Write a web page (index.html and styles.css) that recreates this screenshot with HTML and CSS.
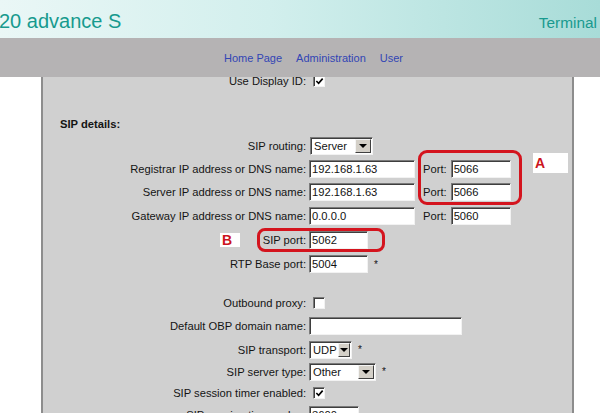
FILE: index.html
```html
<!DOCTYPE html>
<html>
<head>
<meta charset="utf-8">
<link rel="stylesheet" href="styles.css">
</head>
<body>
<header class="top">
  <span class="brand">20 advance S</span>
  <span class="term">Terminal</span>
</header>
<nav class="nav">
  <a href="#">Home Page</a>
  <a href="#">Administration</a>
  <a href="#">User</a>
</nav>
<main class="panel">
  <div class="row r-first h22">
    <span class="lbl">Use Display ID:</span>
    <span class="ctl"><span class="cb checked"><svg viewBox="0 0 10 10" width="9" height="9"><path d="M1.5 4.5 L4 7 L8.5 1.8" fill="none" stroke="#000" stroke-width="1.8"/></svg></span></span>
  </div>
  <div class="heading">SIP details:</div>
  <div class="row h23">
    <span class="lbl">SIP routing:</span>
    <span class="ctl"><span class="sel w62"><span class="sel-text">Server</span><span class="sel-btn"><i class="tri"></i></span></span></span>
  </div>
  <div class="row h23">
    <span class="lbl">Registrar IP address or DNS name:</span>
    <span class="ctl"><span class="inp w106">192.168.1.63</span><span class="port">Port:</span><span class="inp w60">5066</span></span>
  </div>
  <div class="row">
    <span class="lbl">Server IP address or DNS name:</span>
    <span class="ctl"><span class="inp w106">192.168.1.63</span><span class="port">Port:</span><span class="inp w60">5066</span></span>
  </div>
  <div class="row">
    <span class="lbl">Gateway IP address or DNS name:</span>
    <span class="ctl"><span class="inp w106">0.0.0.0</span><span class="port">Port:</span><span class="inp w60">5060</span></span>
  </div>
  <div class="row">
    <span class="lbl">SIP port:</span>
    <span class="ctl"><span class="inp w59">5062</span></span>
  </div>
  <div class="row">
    <span class="lbl">RTP Base port:</span>
    <span class="ctl"><span class="inp w59">5004</span><span class="star">*</span></span>
  </div>
  <div class="spacer"></div>
  <div class="row h22">
    <span class="lbl">Outbound proxy:</span>
    <span class="ctl"><span class="cb"></span></span>
  </div>
  <div class="row">
    <span class="lbl">Default OBP domain name:</span>
    <span class="ctl"><span class="inp w153"></span></span>
  </div>
  <div class="row h23">
    <span class="lbl">SIP transport:</span>
    <span class="ctl"><span class="sel w43"><span class="sel-text">UDP</span><span class="sel-btn"><i class="tri"></i></span></span><span class="star">*</span></span>
  </div>
  <div class="row h21">
    <span class="lbl">SIP server type:</span>
    <span class="ctl"><span class="sel w67"><span class="sel-text">Other</span><span class="sel-btn"><i class="tri"></i></span></span><span class="star">*</span></span>
  </div>
  <div class="row h22">
    <span class="lbl">SIP session timer enabled:</span>
    <span class="ctl"><span class="cb checked"><svg viewBox="0 0 10 10" width="9" height="9"><path d="M1.5 4.5 L4 7 L8.5 1.8" fill="none" stroke="#000" stroke-width="1.8"/></svg></span></span>
  </div>
  <div class="row h22">
    <span class="lbl">SIP session timer value:</span>
    <span class="ctl"><span class="inp w50">3600</span></span>
  </div>

  <div class="mark mark-a"></div>
  <div class="mark mark-b"></div>
  <div class="tag tag-a">A</div>
  <div class="tag tag-b">B</div>
</main>
</body>
</html>
```

FILE: styles.css
```css
html, body {
  margin: 0;
  padding: 0;
  background: #ffffff;
  overflow: hidden;
}
body {
  font-family: "Liberation Sans", Arial, sans-serif;
  font-size: 11.2px;
  color: #141414;
  width: 600px;
  height: 413px;
}
.top {
  height: 38px;
  display: flex;
  justify-content: space-between;
  background: linear-gradient(to right, #eaf7f6 0%, #d2efed 45%, #a8dcd8 100%);
  overflow: hidden;
}
.brand {
  font-size: 20px;
  line-height: 20px;
  padding-top: 11px;
  margin-left: -1px;
  color: #179a8e;
}
.term {
  font-size: 15.4px;
  line-height: 16px;
  padding-top: 15px;
  padding-right: 3px;
  color: #199a8f;
}
.nav {
  height: 39px;
  background: #b5b3b4;
  display: flex;
  align-items: center;
  gap: 14px;
  padding-left: 224px;
  font-size: 11px;
}
.nav a {
  color: #3245b5;
  text-decoration: none;
}
.panel {
  position: relative;
  box-sizing: border-box;
  margin-left: 41px;
  width: 533px;
  height: 336px;
  background: #d0d0d0;
  border-left: 2px solid #8d8d8d;
  border-right: 2px solid #8d8d8d;
  overflow: hidden;
}
.row {
  display: grid;
  grid-template-columns: 263px 1fr;
  column-gap: 3px;
  align-items: center;
  height: 24px;
}
.h23 { height: 23px; }
.h22 { height: 22px; }
.h21 { height: 21px; }
.r-first { margin-top: -7px; }
.lbl {
  text-align: right;
  white-space: nowrap;
}
.ctl {
  display: flex;
  align-items: center;
}
.heading {
  margin-top: 23px;
  height: 19px;
  line-height: 19px;
  padding-left: 17px;
  font-weight: bold;
}
.spacer { height: 16px; }
.inp {
  box-sizing: border-box;
  height: 18px;
  line-height: 16px;
  padding-left: 2px;
  background: #ffffff;
  border: 1px solid;
  border-color: #7a7a7a #f2f2f2 #f2f2f2 #7a7a7a;
  box-shadow: inset 1px 1px 0 #3e3e3e;
  color: #111;
  white-space: nowrap;
  overflow: hidden;
}
.w106 { width: 106px; }
.w60 { width: 60px; }
.w59 { width: 59px; }
.w50 { width: 50px; }
.w153 { width: 153px; }
.port {
  margin-left: 8px;
  margin-right: 4px;
}
.star {
  margin-left: 6px;
  font-size: 10px;
}
.sel {
  box-sizing: border-box;
  height: 18px;
  display: flex;
  align-items: stretch;
  background: #ffffff;
  border: 1px solid;
  border-color: #7a7a7a #f2f2f2 #f2f2f2 #7a7a7a;
  box-shadow: inset 1px 1px 0 #3e3e3e;
}
.w62 { width: 63px; margin-left: 1px; }
.w43 { width: 43px; }
.w67 { width: 67px; }
.sel-text {
  flex: 1;
  padding-left: 3px;
  line-height: 16px;
}
.sel-btn {
  box-sizing: border-box;
  width: 16px;
  margin: 1px;
  background: #d4d0c8;
  border: 1px solid;
  border-color: #f4f4f4 #404040 #404040 #f4f4f4;
  display: flex;
  align-items: center;
  justify-content: center;
}
.tri {
  width: 0;
  height: 0;
  border-left: 4px solid transparent;
  border-right: 4px solid transparent;
  border-top: 4px solid #000;
}
.cb {
  box-sizing: border-box;
  width: 12px;
  height: 12px;
  margin-left: 4px;
  background: #ffffff;
  border: 1px solid;
  border-color: #7a7a7a #f2f2f2 #f2f2f2 #7a7a7a;
  box-shadow: inset 1px 1px 0 #3e3e3e;
  display: flex;
  align-items: center;
  justify-content: center;
}
.cb svg { display: block; margin-left: 1px; margin-top: 1px; }
.mark {
  position: absolute;
  box-sizing: border-box;
  border: 3px solid #d4141e;
  border-radius: 9px;
}
.mark-a {
  left: 375px;
  top: 73px;
  width: 104px;
  height: 55px;
}
.mark-b {
  left: 214px;
  top: 151px;
  width: 128px;
  height: 24px;
  border-radius: 8px;
}
.tag {
  position: absolute;
  background: #ffffff;
  color: #cc1420;
  font-weight: bold;
  font-size: 14px;
  line-height: 14px;
  box-sizing: border-box;
}
.tag-a {
  left: 490px;
  top: 76px;
  width: 35px;
  height: 20px;
  padding: 3px 0 0 2px;
}
.tag-b {
  left: 177px;
  top: 156px;
  width: 20px;
  height: 14px;
  padding: 0 0 0 2px;
}
```
